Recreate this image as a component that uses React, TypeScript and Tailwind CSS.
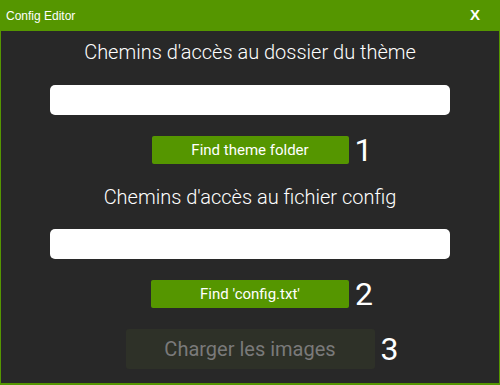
import React from "react";

const Step = ({ n }: { n: string }) => (
  <span className="absolute left-full top-1/2 ml-[6px] -translate-y-1/2 text-[32px] font-normal leading-none text-white">
    {n}
  </span>
);

const App = (): JSX.Element => {
  return (
    <div
      className="flex h-[385px] w-[500px] flex-col bg-[#559600]"
      style={{ fontFamily: "Roboto, 'Liberation Sans', sans-serif" }}
    >
      <div className="flex h-[31px] items-center justify-between px-[6px]">
        <span className="text-[12px] text-white" style={{ fontFamily: "'Liberation Sans', Arial, sans-serif" }}>
          Config Editor
        </span>
        <span className="mr-[14px] text-[15px] font-bold text-white" style={{ fontFamily: "'Liberation Sans', Arial, sans-serif" }}>
          X
        </span>
      </div>
      <div className="mx-[1px] mb-[2px] flex flex-1 flex-col items-center bg-[#282828]">
        <h2 className="mt-[8px] text-[20px] font-light leading-[26px] text-white">Chemins d'accès au dossier du thème</h2>
        <input className="mt-[20px] h-[30px] w-[400px] rounded-[5px] bg-white" />
        <div className="relative mt-[21px]">
          <button className="h-[28px] w-[197px] rounded-[2px] bg-[#559600] text-[15px] font-normal text-white">
            Find theme folder
          </button>
          <Step n="1" />
        </div>
        <h2 className="mt-[20px] text-[20px] font-light leading-[26px] text-white">Chemins d'accès au fichier config</h2>
        <input className="mt-[19px] h-[30px] w-[400px] rounded-[5px] bg-white" />
        <div className="relative mt-[21px]">
          <button className="h-[28px] w-[198px] rounded-[2px] bg-[#559600] text-[15px] font-normal text-white">
            Find 'config.txt'
          </button>
          <Step n="2" />
        </div>
        <div className="relative mt-[21px]">
          <button className="h-[40px] w-[249px] rounded-[3px] bg-[#2e3128] text-[20px] text-[#7a7a7a]">
            Charger les images
          </button>
          <Step n="3" />
        </div>
      </div>
    </div>
  );
};

export default App;
